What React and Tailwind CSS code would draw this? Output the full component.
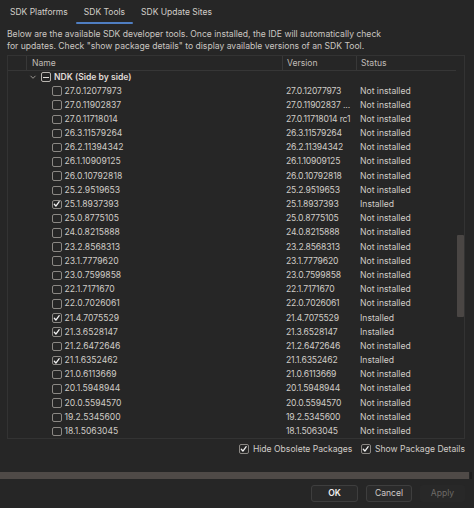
import React from "react";

const rows = [
  ["27.0.12077973", "27.0.12077973", false],
  ["27.0.11902837", "27.0.11902837 ...", false],
  ["27.0.11718014", "27.0.11718014 rc1", false],
  ["26.3.11579264", "26.3.11579264", false],
  ["26.2.11394342", "26.2.11394342", false],
  ["26.1.10909125", "26.1.10909125", false],
  ["26.0.10792818", "26.0.10792818", false],
  ["25.2.9519653", "25.2.9519653", false],
  ["25.1.8937393", "25.1.8937393", true],
  ["25.0.8775105", "25.0.8775105", false],
  ["24.0.8215888", "24.0.8215888", false],
  ["23.2.8568313", "23.2.8568313", false],
  ["23.1.7779620", "23.1.7779620", false],
  ["23.0.7599858", "23.0.7599858", false],
  ["22.1.7171670", "22.1.7171670", false],
  ["22.0.7026061", "22.0.7026061", false],
  ["21.4.7075529", "21.4.7075529", true],
  ["21.3.6528147", "21.3.6528147", true],
  ["21.2.6472646", "21.2.6472646", false],
  ["21.1.6352462", "21.1.6352462", true],
  ["21.0.6113669", "21.0.6113669", false],
  ["20.1.5948944", "20.1.5948944", false],
  ["20.0.5594570", "20.0.5594570", false],
  ["19.2.5345600", "19.2.5345600", false],
  ["18.1.5063045", "18.1.5063045", false],
];

function Box({ checked }) {
  return (
    <span className="w-[9.5px] h-[9.5px] shrink-0 rounded-[2px] border border-[#8b8884] flex items-center justify-center">
      {checked && (
        <svg width="8" height="8" viewBox="0 0 8 8">
          <path d="M1.4 4.3 L3.1 6.2 L6.6 1.5" stroke="#f2f2f2" strokeWidth="1.4" fill="none" strokeLinecap="round" strokeLinejoin="round" />
        </svg>
      )}
    </span>
  );
}

export default function App() {
  return (
    <div className="w-[474px] h-[508px] bg-[#262626] text-[#d0ccc6] font-['Inter',sans-serif] text-[8.6px] flex flex-col overflow-hidden">
      {/* Tabs */}
      <div className="h-[24px] flex pl-[2px] text-[8.5px] text-[#d2cec9]">
        <div className="px-[8px] flex items-center">SDK Platforms</div>
        <div className="px-[8px] flex items-center relative">
          SDK Tools
          <span className="absolute left-0 right-0 bottom-[0px] h-[2px] bg-[#4f7ec2] rounded-[1px]" />
        </div>
        <div className="px-[8px] flex items-center">SDK Update Sites</div>
      </div>
      {/* Description */}
      <div className="px-[7px] pt-[4px] leading-[12px] text-[#cbc7c2] h-[31px]">
        <div>Below are the available SDK developer tools. Once installed, the IDE will automatically check</div>
        <div>for updates. Check "show package details" to display available versions of an SDK Tool.</div>
      </div>
      {/* Table */}
      <div className="ml-[7px] w-[458px] h-[384px] border border-[#333333] flex">
        <div className="flex-1 flex flex-col">
          <div className="h-[15px] flex border-b border-[#363636] text-[#c0bcb7] shrink-0">
            <div className="w-[19px] border-r border-[#383838]" />
            <div className="w-[256px] pl-[5px] flex items-center border-r border-[#383838]">Name</div>
            <div className="w-[74px] pl-[4px] flex items-center border-r border-[#383838]">Version</div>
            <div className="flex-1 pl-[4px] flex items-center">Status</div>
          </div>
          <div className="h-[14.2px] flex items-center">
            <div className="w-[275px] flex items-center pl-[21px]">
              <svg width="8" height="8" viewBox="0 0 8 8" className="mr-[4px]">
                <path d="M1.5 2.8 L4 5.3 L6.5 2.8" stroke="#9a9691" strokeWidth="1" fill="none" />
              </svg>
              <span className="w-[10px] h-[10px] rounded-[2px] border border-[#b9b5b0] flex items-center justify-center mr-[3px]">
                <span className="w-[6px] h-[1.4px] bg-[#e0ddd9]" />
              </span>
              <span className="text-[#e0dcd7] font-semibold">NDK (Side by side)</span>
            </div>
          </div>
          {rows.map(([name, ver, inst], i) => (
            <div key={i} className="h-[14.2px] flex items-center shrink-0">
              <div className="w-[276px] flex items-center pl-[44px] gap-[3px]">
                <Box checked={inst} />
                <span>{name}</span>
              </div>
              <div className="w-[74px] pl-[2px] whitespace-nowrap tracking-[-0.15px]">{ver}</div>
              <div className="flex-1 pl-[2px]">{inst ? "Installed" : "Not installed"}</div>
            </div>
          ))}
        </div>
        <div className="w-[8px] flex flex-col border-l border-transparent">
          <div className="h-[179px]" />
          <div className="h-[82px] w-[7px] bg-[#4a4644] rounded-[1px]" />
        </div>
      </div>
      {/* Options */}
      <div className="h-[20px] flex items-center justify-end pr-[9px] gap-[9px] text-[#d0ccc7] text-[8.6px]">
        <label className="flex items-center gap-[4px]">
          <Box checked />
          <span>Hide Obsolete Packages</span>
        </label>
        <label className="flex items-center gap-[4px]">
          <Box checked />
          <span>Show Package Details</span>
        </label>
      </div>
      <div className="h-[13px]" />
      <div className="h-[7px] flex">
        <div className="w-[469px] bg-[#4f4a47]" />
        <div className="w-[2px] ml-[1px] bg-[#1e1e1e]" />
      </div>
      <div className="flex-1 flex items-center justify-end pr-[9px] gap-[8px] text-[8.6px]">
        <button className="w-[47px] h-[17px] border border-[#3e3e3e] rounded-[3px] bg-[#2a2a2a] text-[#f0f0f0] font-semibold">OK</button>
        <button className="w-[46px] h-[17px] border border-[#3e3e3e] rounded-[3px] bg-[#2a2a2a] text-[#d0ccc7]">Cancel</button>
        <button className="w-[45px] h-[17px] rounded-[3px] bg-[#282828] text-[#6d6a67]">Apply</button>
      </div>
    </div>
  );
}
